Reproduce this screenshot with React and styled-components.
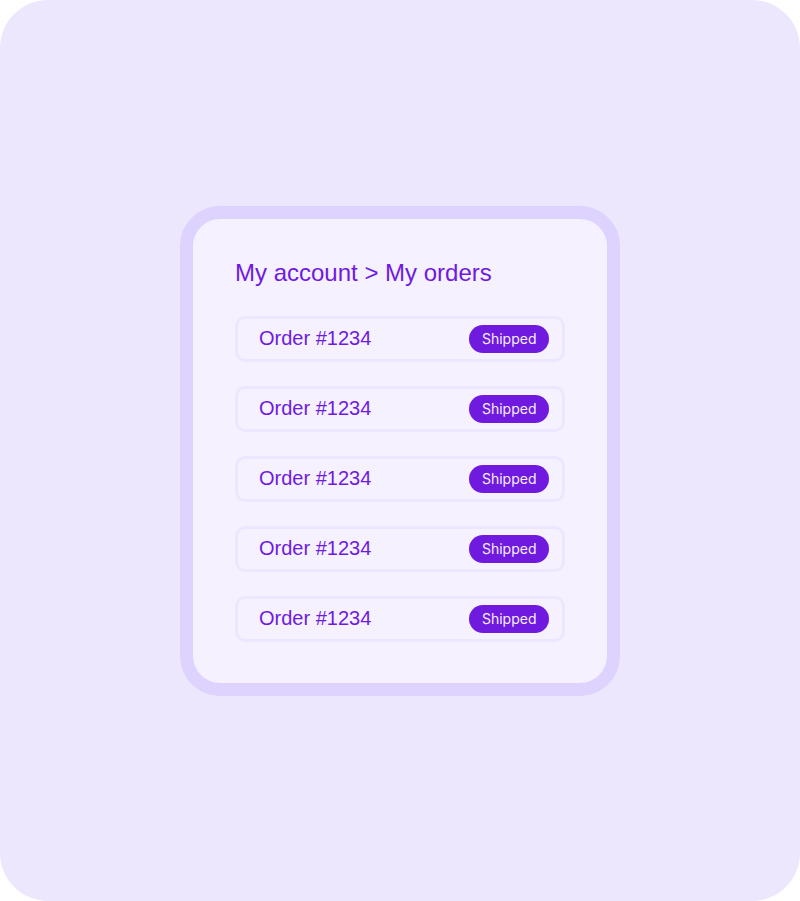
import styled, { createGlobalStyle } from 'styled-components';

const GlobalStyle = createGlobalStyle`
	html, body {
		margin: 0;
		padding: 0;
		background: #ffffff;
	}
	* {
		box-sizing: border-box;
	}
`;

const Page = styled.div`
	width: 800px;
	height: 901px;
	background: #ede7fe;
	border-radius: 48px;
	display: flex;
	align-items: center;
	justify-content: center;
`;

const Frame = styled.div`
	width: 440px;
	height: 490px;
	border: 13px solid #ddd3fe;
	border-radius: 40px;
	background: #f5f1fe;
	padding: 40px 42px;
	display: flex;
	flex-direction: column;
`;

const Crumbs = styled.h1`
	margin: 0 0 29px;
	font-family: 'Liberation Sans', Arial, sans-serif;
	font-weight: 400;
	font-size: 24px;
	line-height: 28px;
	color: #6f1ae0;
	white-space: nowrap;
`;

const OrderList = styled.ul`
	list-style: none;
	margin: 0;
	padding: 0;
	display: flex;
	flex-direction: column;
	gap: 24px;
`;

const OrderRow = styled.li`
	height: 46px;
	border: 3px solid #ede6fe;
	border-radius: 10px;
	padding: 0 13px 0 21px;
	display: flex;
	align-items: center;
	justify-content: space-between;
`;

const OrderName = styled.span`
	font-family: 'Liberation Sans', Arial, sans-serif;
	font-size: 20px;
	color: #6f1ae0;
`;

const Badge = styled.span`
	height: 28px;
	padding: 0 12.5px;
	border-radius: 14px;
	background: ${({ $tone }) => $tone || '#7019df'};
	color: #f5f0fe;
	font-family: Inter, 'Liberation Sans', sans-serif;
	font-size: 14px;
	display: inline-flex;
	align-items: center;
`;

const orders = [
	{ id: 1, name: 'Order #1234', status: 'Shipped' },
	{ id: 2, name: 'Order #1234', status: 'Shipped' },
	{ id: 3, name: 'Order #1234', status: 'Shipped' },
	{ id: 4, name: 'Order #1234', status: 'Shipped' },
	{ id: 5, name: 'Order #1234', status: 'Shipped' },
];

export default function App() {
	return (
		<>
			<GlobalStyle />
			<Page>
				<Frame>
					<Crumbs>My account &gt; My orders</Crumbs>
					<OrderList>
						{orders.map((order) => (
							<OrderRow key={order.id}>
								<OrderName>{order.name}</OrderName>
								<Badge>{order.status}</Badge>
							</OrderRow>
						))}
					</OrderList>
				</Frame>
			</Page>
		</>
	);
}
